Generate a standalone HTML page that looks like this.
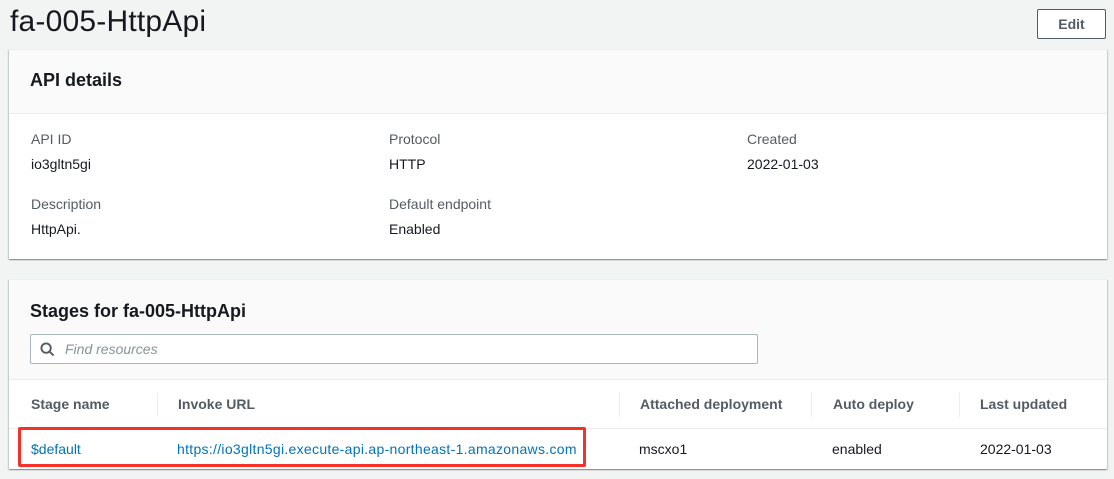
<!DOCTYPE html>
<html><head><style>
*{box-sizing:border-box;margin:0;padding:0}
body{width:1114px;height:479px;background:#f2f3f3;font-family:"Liberation Sans",Arial,sans-serif;color:#16191f;position:relative;overflow:hidden;font-size:14px}
.abs{position:absolute}
h1{position:absolute;left:10px;top:5px;font-size:30px;font-weight:400;color:#16191f;letter-spacing:0.2px}
.btn{left:1037px;top:9px;width:69px;height:30px;border:1px solid #545b64;border-radius:2px;background:#fff;font-weight:700;color:#545b64;text-align:center;line-height:28px}
.panel{left:9px;width:1098px;background:#fff;box-shadow:0 1px 1px 0 rgba(0,28,36,.3),1px 1px 1px 0 rgba(0,28,36,.15),-1px 1px 1px 0 rgba(0,28,36,.15);border-top:1px solid #eaeded}
.hdr{background:#fafafa;border-bottom:1px solid #eaeded}
h2{font-size:18px;font-weight:700;position:absolute;left:21px}
.lbl{color:#545b64}
.th{font-weight:700;color:#545b64;top:396px}
.sep{width:1px;height:24px;background:#eaeded;top:393px}
a{color:#0073bb;text-decoration:none}
</style></head><body>
<h1>fa-005-HttpApi</h1>
<div class="abs btn">Edit</div>

<div class="abs panel" style="top:49px;height:210px">
 <div class="hdr" style="height:64px;position:relative"><h2 style="top:20px">API details</h2></div>
</div>
<div class="abs lbl" style="left:31px;top:131px">API ID</div>
<div class="abs" style="left:31px;top:156px">io3gltn5gi</div>
<div class="abs lbl" style="left:31px;top:196px">Description</div>
<div class="abs" style="left:31px;top:221px">HttpApi.</div>
<div class="abs lbl" style="left:389px;top:131px">Protocol</div>
<div class="abs" style="left:389px;top:156px">HTTP</div>
<div class="abs lbl" style="left:389px;top:196px">Default endpoint</div>
<div class="abs" style="left:389px;top:221px">Enabled</div>
<div class="abs lbl" style="left:747px;top:131px">Created</div>
<div class="abs" style="left:747px;top:156px">2022-01-03</div>

<div class="abs panel" style="top:279px;height:190px">
 <div class="hdr" style="height:100px;position:relative"><h2 style="top:21px">Stages for fa-005-HttpApi</h2>
  <div class="abs" style="left:21px;top:54px;width:728px;height:30px;border:1px solid #aab7b8;border-radius:2px;background:#fff">
   <svg class="abs" style="left:9px;top:7px" width="15" height="15" viewBox="0 0 16 16"><circle cx="6.5" cy="6.5" r="5" fill="none" stroke="#545b64" stroke-width="2"/><line x1="10" y1="10" x2="14.5" y2="14.5" stroke="#545b64" stroke-width="2"/></svg>
   <span class="abs" style="left:34px;top:6px;font-style:italic;color:#879596">Find resources</span>
  </div>
 </div>
 <div style="height:49px;border-bottom:1px solid #eaeded"></div>
</div>
<div class="abs th" style="left:31px">Stage name</div>
<div class="abs sep" style="left:157px"></div>
<div class="abs th" style="left:178px">Invoke URL</div>
<div class="abs sep" style="left:619px"></div>
<div class="abs th" style="left:640px">Attached deployment</div>
<div class="abs sep" style="left:811px"></div>
<div class="abs th" style="left:833px">Auto deploy</div>
<div class="abs sep" style="left:959px"></div>
<div class="abs th" style="left:980px">Last updated</div>
<div class="abs" style="left:31px;top:441px"><a>$default</a></div>
<div class="abs" style="left:177px;top:441px;letter-spacing:0.3px"><a>https://io3gltn5gi.execute-api.ap-northeast-1.amazonaws.com</a></div>
<div class="abs" style="left:639px;top:441px">mscxo1</div>
<div class="abs" style="left:832px;top:441px">enabled</div>
<div class="abs" style="left:980px;top:441px">2022-01-03</div>
<div class="abs" style="left:18px;top:427px;width:568px;height:40px;border:3px solid #f5312a;border-radius:2px"></div>
</body></html>
